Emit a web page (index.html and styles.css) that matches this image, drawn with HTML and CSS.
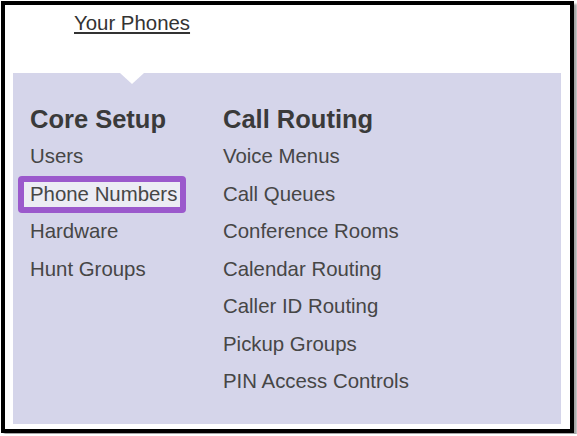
FILE: index.html
```html
<!DOCTYPE html>
<html lang="en">
<head>
    <meta charset="UTF-8">
    <meta name="viewport" content="width=device-width, initial-scale=1.0">
    <title>Phone System Menu</title>
    <link rel="stylesheet" href="styles.css">
</head>
<body>

    <div class="frame">
        <div class="top-nav">
            <a href="#" class="top-link">Your Phones</a>
        </div>

        <div class="menu-panel">
            <div class="menu-col core">
                <h2>Core Setup</h2>
                <a href="#" class="menu-item">Users</a>
                <a href="#" class="menu-item"><span class="highlight">Phone Numbers</span></a>
                <a href="#" class="menu-item">Hardware</a>
                <a href="#" class="menu-item">Hunt Groups</a>
            </div>
            <div class="menu-col">
                <h2>Call Routing</h2>
                <a href="#" class="menu-item">Voice Menus</a>
                <a href="#" class="menu-item">Call Queues</a>
                <a href="#" class="menu-item">Conference Rooms</a>
                <a href="#" class="menu-item">Calendar Routing</a>
                <a href="#" class="menu-item">Caller ID Routing</a>
                <a href="#" class="menu-item">Pickup Groups</a>
                <a href="#" class="menu-item">PIN Access Controls</a>
            </div>
        </div>
    </div>

</body>
</html>
```

FILE: styles.css
```css
* {
    box-sizing: border-box;
}
body {
    font-family: 'Liberation Sans', Arial, sans-serif;
    background-color: white;
    margin: 0;
    padding: 1px;
}
.frame {
    width: 573px;
    height: 432px;
    border: 4px solid black;
    background-color: white;
    box-shadow: 3px 3px 2px rgba(0, 0, 0, 0.35);
    display: flex;
    flex-direction: column;
    padding: 0 9px 5px 8px;
}
.top-nav {
    padding: 7px 0 0 61px;
    height: 68px;
}
.top-link {
    font-size: 20.4px;
    line-height: 23px;
    color: #333;
    text-decoration: underline;
    text-underline-offset: 2px;
}
.menu-panel {
    position: relative;
    flex: 1;
    background-color: #d5d5ea;
    display: flex;
    padding: 31px 0 0 17px;
}
/* little pointer under the top link */
.menu-panel::before {
    content: "";
    position: absolute;
    top: 0;
    left: 107px;
    border-left: 12px solid transparent;
    border-right: 12px solid transparent;
    border-top: 11px solid white;
}
.menu-col {
    display: flex;
    flex-direction: column;
    align-items: flex-start;
}
.menu-col.core {
    width: 193px;
}
h2 {
    font-size: 25.5px;
    font-weight: bold;
    line-height: 30px;
    color: #3a3a3a;
    margin: 0 0 4px 0;
}
.menu-item {
    font-size: 20.4px;
    line-height: 37.5px;
    color: #464646;
    text-decoration: none;
    white-space: nowrap;
}
.highlight {
    display: inline-block;
    margin-left: -12px;
    padding: 0 3px 0 6px;
    line-height: 25.5px;
    border: 6px solid #9b59cc;
    border-radius: 4px;
    background-color: #ececf4;
}
```
